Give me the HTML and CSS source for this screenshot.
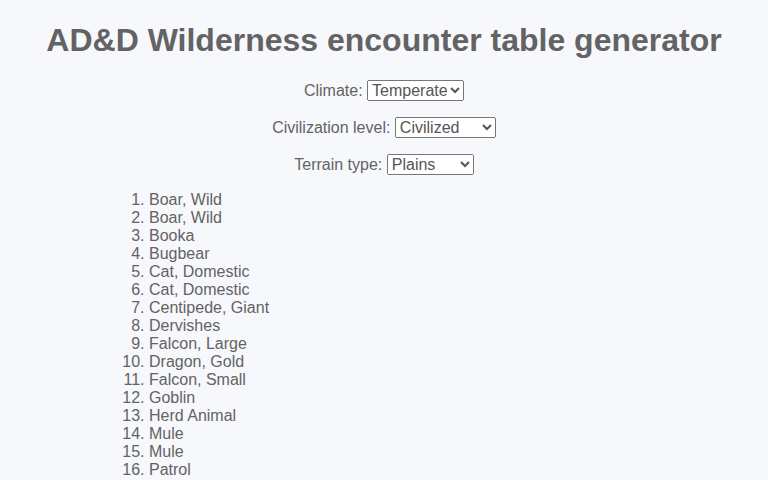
FILE: index.html
```html
<!DOCTYPE html>
<html lang="en">
<head>
    <meta charset="UTF-8">
    <meta name="viewport" content="width=device-width, initial-scale=1.0">
    <title>AD&amp;D Wilderness encounter table generator</title>
    <link rel="stylesheet" href="styles.css">
</head>
<body>
    <h1>AD&amp;D Wilderness encounter table generator</h1>

    <p class="option">
        <label for="climate">Climate:</label>
        <select id="climate">
            <option>Arctic</option>
            <option>Subarctic</option>
            <option selected>Temperate</option>
            <option>Tropical</option>
        </select>
    </p>

    <p class="option">
        <label for="civilization">Civilization level:</label>
        <select id="civilization">
            <option selected>Civilized</option>
            <option>Uncivilized</option>
        </select>
    </p>

    <p class="option">
        <label for="terrain">Terrain type:</label>
        <select id="terrain">
            <option selected>Plains</option>
            <option>Desert</option>
            <option>Forest</option>
            <option>Hills</option>
            <option>Swamp</option>
        </select>
    </p>

    <div class="table">
        <ol id="encounters">
            <li>Boar, Wild</li>
            <li>Boar, Wild</li>
            <li>Booka</li>
            <li>Bugbear</li>
            <li>Cat, Domestic</li>
            <li>Cat, Domestic</li>
            <li>Centipede, Giant</li>
            <li>Dervishes</li>
            <li>Falcon, Large</li>
            <li>Dragon, Gold</li>
            <li>Falcon, Small</li>
            <li>Goblin</li>
            <li>Herd Animal</li>
            <li>Mule</li>
            <li>Mule</li>
            <li>Patrol</li>
            <li>Pilgrims</li>
            <li>Ram, Giant</li>
            <li>Raven, Huge</li>
            <li>Spider, Large</li>
        </ol>
    </div>
</body>
</html>
```

FILE: styles.css
```css
body {
    font-family: "Liberation Sans", Arial, sans-serif;
    font-size: 16px;
    background-color: #f7f8fc;
    color: #636363;
}

h1 {
    text-align: center;
    font-size: 32px;
    margin-top: 14px;
}

.option {
    text-align: center;
}

.option select {
    font-family: inherit;
    font-size: 16px;
    color: #555;
}

#climate {
    width: 97px;
}

#civilization {
    width: 101px;
}

#terrain {
    width: 87px;
}

.table {
    width: 550px;
    margin: 0 auto;
}

#encounters {
    line-height: 18px;
}
```
